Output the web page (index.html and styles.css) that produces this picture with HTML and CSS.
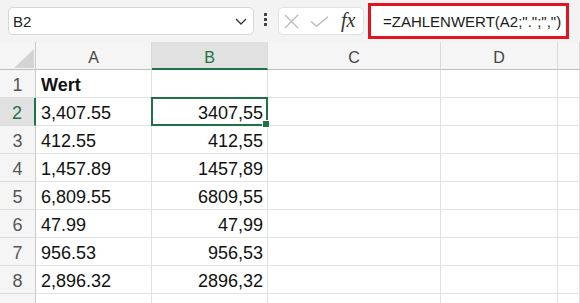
FILE: index.html
```html
<!DOCTYPE html>
<html lang="de">

<head>
    <meta charset="UTF-8">
    <meta name="viewport" content="width=device-width, initial-scale=1.0">
    <title>ZAHLENWERT</title>
    <link rel="stylesheet" href="styles.css">
</head>

<body>
    <div class="toolbar">
        <div class="name-box">
            <span>B2</span>
            <svg class="chevron" width="12" height="7" viewBox="0 0 12 7">
                <path d="M1 1 L6 6 L11 1" fill="none" stroke="#3b3b3b" stroke-width="1.4" />
            </svg>
        </div>
        <div class="more"><i></i><i></i><i></i></div>
        <div class="fx-buttons">
            <svg width="15" height="15" viewBox="0 0 15 15">
                <path d="M1 1 L14 14 M14 1 L1 14" stroke="#b9b9b9" stroke-width="1.3" />
            </svg>
            <svg width="19" height="11" viewBox="0 0 19 11">
                <path d="M1 5.5 L6.5 10.3 L18 0.7" fill="none" stroke="#b9b9b9" stroke-width="1.3" />
            </svg>
            <span class="fx">fx</span>
        </div>
        <div class="formula">=ZAHLENWERT(A2;".";",")</div>
    </div>

    <div class="sheet">
        <div class="corner">
            <svg width="20" height="19" viewBox="0 0 20 19"><path d="M20 0 L20 19 L0 19 Z" fill="#d3d3d3" /></svg>
        </div>
        <div class="col-head">A</div>
        <div class="col-head active">B</div>
        <div class="col-head">C</div>
        <div class="col-head">D</div>
        <div class="col-head"></div>

        <div class="row-head">1</div>
        <div class="cell bold">Wert</div>
        <div class="cell"></div><div class="cell"></div><div class="cell"></div><div class="cell"></div>

        <div class="row-head active">2</div>
        <div class="cell">3,407.55</div>
        <div class="cell num selected">3407,55</div>
        <div class="cell"></div><div class="cell"></div><div class="cell"></div>

        <div class="row-head">3</div>
        <div class="cell">412.55</div>
        <div class="cell num">412,55</div>
        <div class="cell"></div><div class="cell"></div><div class="cell"></div>

        <div class="row-head">4</div>
        <div class="cell">1,457.89</div>
        <div class="cell num">1457,89</div>
        <div class="cell"></div><div class="cell"></div><div class="cell"></div>

        <div class="row-head">5</div>
        <div class="cell">6,809.55</div>
        <div class="cell num">6809,55</div>
        <div class="cell"></div><div class="cell"></div><div class="cell"></div>

        <div class="row-head">6</div>
        <div class="cell">47.99</div>
        <div class="cell num">47,99</div>
        <div class="cell"></div><div class="cell"></div><div class="cell"></div>

        <div class="row-head">7</div>
        <div class="cell">956.53</div>
        <div class="cell num">956,53</div>
        <div class="cell"></div><div class="cell"></div><div class="cell"></div>

        <div class="row-head">8</div>
        <div class="cell">2,896.32</div>
        <div class="cell num">2896,32</div>
        <div class="cell"></div><div class="cell"></div><div class="cell"></div>

        <div class="row-head"></div>
        <div class="cell"></div><div class="cell"></div><div class="cell"></div><div class="cell"></div><div class="cell"></div>
    </div>
</body>

</html>
```

FILE: styles.css
```css
* {
    box-sizing: border-box;
}

html,
body {
    height: 100%;
}

body {
    margin: 0;
    font-family: "Liberation Sans", Arial, sans-serif;
    background-color: #ffffff;
    color: #111111;
    overflow: hidden;
}

/* formula bar */
.toolbar {
    display: flex;
    align-items: flex-start;
    height: 42px;
    padding-left: 8px;
    background-color: #f3f3f3;
}

.name-box {
    display: flex;
    align-items: center;
    justify-content: space-between;
    width: 246px;
    height: 28px;
    margin-top: 7px;
    padding: 0 6px 0 4px;
    background-color: #ffffff;
    border: 1px solid #d6d6d6;
    border-radius: 5px;
    font-size: 15px;
    color: #222222;
}

.chevron {
    margin-top: 1px;
}

.more {
    display: flex;
    flex-direction: column;
    gap: 2px;
    margin: 13px 0 0 10px;
}

.more i {
    display: block;
    width: 3px;
    height: 3px;
    background-color: #444444;
}

.fx-buttons {
    display: flex;
    align-items: center;
    width: 86px;
    height: 28px;
    margin: 7px 0 0 11px;
    padding-left: 5px;
    gap: 11px;
    background-color: #ffffff;
    border: 1px solid #e2e2e2;
    border-radius: 5px;
}

.fx {
    font-family: "Liberation Serif", "Times New Roman", serif;
    font-style: italic;
    font-size: 20px;
    color: #333333;
    margin-left: 1px;
    margin-top: -2px;
}

.formula {
    width: 201px;
    height: 36px;
    margin: 3px 0 0 4px;
    padding-left: 12px;
    border: 3px solid #e3141f;
    background-color: #ffffff;
    font-size: 15px;
    line-height: 31px;
    color: #1a1a1a;
    white-space: nowrap;
}

/* grid */
.sheet {
    display: grid;
    grid-template-columns: 36px 116px 116px 173px 117px 1fr;
    grid-auto-rows: 28px;
    height: calc(100% - 42px);
    overflow: hidden;
}

.corner,
.col-head,
.row-head {
    background-color: #f5f5f5;
    color: #444444;
}

.corner {
    display: flex;
    align-items: flex-end;
    justify-content: flex-end;
    padding: 0 1px 1px 0;
    border-right: 1px solid #c9c9c9;
    border-bottom: 1px solid #bdbdbd;
}

.col-head {
    text-align: center;
    font-size: 16px;
    padding-top: 4px;
    line-height: 23px;
    border-right: 1px solid #dadada;
    border-bottom: 1px solid #bdbdbd;
}

.col-head.active {
    background-color: #e1e1e1;
    color: #1f7244;
    border-bottom: 2px solid #1f7244;
}

.row-head {
    text-align: center;
    font-size: 18px;
    color: #555555;
    padding-top: 3px;
    line-height: 24px;
    border-right: 1px solid #c9c9c9;
    border-bottom: 1px solid #dddddd;
}

.row-head.active {
    background-color: #e1e1e1;
    color: #1f7244;
    border-right: 2px solid #1f7244;
}

.cell {
    font-size: 18px;
    padding: 3px 5px 0;
    line-height: 24px;
    white-space: nowrap;
    overflow: hidden;
    border-right: 1px solid #e1e1e1;
    border-bottom: 1px solid #e1e1e1;
}

.cell.bold {
    font-weight: bold;
}

.cell.num {
    text-align: right;
    padding-right: 4px;
}

.cell.selected {
    position: relative;
    overflow: visible;
}

.cell.selected::after {
    content: "";
    position: absolute;
    top: -1px;
    left: -1px;
    right: -1px;
    bottom: -1px;
    border: 2px solid #1f7244;
}

.cell.selected::before {
    content: "";
    position: absolute;
    right: -3px;
    bottom: -3px;
    width: 6px;
    height: 6px;
    background-color: #1f7244;
    border: 1px solid #ffffff;
    z-index: 1;
}
```
